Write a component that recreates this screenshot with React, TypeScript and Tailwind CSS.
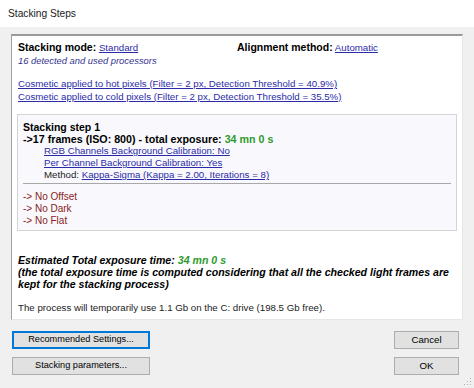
import React from "react";

function Link({ children }: { children: React.ReactNode }) {
  return <span className="text-[#2b2ba8] underline underline-offset-[1px]">{children}</span>;
}

function WinButton({ label, focused, small }: { label: string; focused?: boolean; small?: boolean }) {
  return (
    <button
      className={
        "h-[18px] w-full bg-[#e1e1e1] text-black leading-none border " +
        (small ? "text-[9.2px] " : "text-[9.7px] ") +
        (focused ? "border-[#0078d7] shadow-[inset_0_0_0_1px_#0078d7]" : "border-[#adadad]")
      }
    >
      {label}
    </button>
  );
}

export default function App() {
  return (
    <div className="w-[474px] h-[388px] bg-[#f0f0f0] flex flex-col text-[9.7px] leading-[12px] text-black font-['Liberation_Sans',Arial,sans-serif] overflow-hidden relative">
      {/* title bar */}
      <div className="h-[27px] bg-white flex items-center pl-2 text-[10.2px] text-[#1a1a1a]">Stacking Steps</div>

      {/* summary panel */}
      <div className="mx-[11px] mt-[7px] h-[286px] bg-white border-t-2 border-l border-r border-b border-t-[#9a9a9a] border-l-[#a0a0a0] border-r-[#e6e6e6] border-b-[#e6e6e6] px-[5px] pt-[5px] flex flex-col">
        <div className="flex pl-px">
          <div className="w-[219px]">
            <b className="text-[10.5px]">Stacking mode:</b> <Link>Standard</Link>
          </div>
          <div>
            <b className="text-[10.5px]">Alignment method:</b> <Link>Automatic</Link>
          </div>
        </div>
        <div className="pl-px italic text-[#33338f] text-[9.4px] mt-px">16 detected and used processors</div>

        <div className="pl-px mt-[11px] flex flex-col gap-px">
          <div>
            <Link>Cosmetic applied to hot pixels (Filter = 2 px, Detection Threshold = 40.9%)</Link>
          </div>
          <div>
            <Link>Cosmetic applied to cold pixels (Filter = 2 px, Detection Threshold = 35.5%)</Link>
          </div>
        </div>

        {/* stacking step box */}
        <div className="mt-[11px] h-[117px] border border-[#d4d4d4] bg-[#f9f9fd] px-[5px] pt-[6px]">
          <div className="font-bold text-[10.5px]">Stacking step 1</div>
          <div className="font-bold text-[10.7px]">
            -&gt;17 frames (ISO: 800) - total exposure: <span className="text-[#2e9a2e]">34 mn 0 s</span>
          </div>
          <div className="pl-[21px] flex flex-col">
            <div>
              <Link>RGB Channels Background Calibration: No</Link>
            </div>
            <div>
              <Link>Per Channel Background Calibration: Yes</Link>
            </div>
            <div className="text-[#222]">
              Method: <Link>Kappa-Sigma (Kappa = 2.00, Iterations = 8)</Link>
            </div>
          </div>
          <div className="h-px bg-[#a8a8a8] mt-[2px] mb-[7px]" />
          <div className="text-[#8a1c1c] flex flex-col text-[10px]">
            <div>-&gt; No Offset</div>
            <div>-&gt; No Dark</div>
            <div>-&gt; No Flat</div>
          </div>
        </div>

        <div className="pl-px mt-[23px] italic font-bold text-[10.6px]">
          <div>
            Estimated Total exposure time: <span className="text-[#2e9a2e]">34 mn 0 s</span>
          </div>
          <div>(the total exposure time is computed considering that all the checked light frames are</div>
          <div>kept for the stacking process)</div>
        </div>
        <div className="pl-px mt-[12px] text-[#222]">The process will temporarily use 1.1 Gb on the C: drive (198.5 Gb free).</div>
      </div>

      {/* buttons */}
      <div className="flex justify-between pl-[12px] pr-[15px] mt-[11px]">
        <div className="w-[138px] flex flex-col gap-[8px]">
          <WinButton label="Recommended Settings..." focused small />
          <WinButton label="Stacking parameters..." small />
        </div>
        <div className="w-[65px] flex flex-col gap-[8px]">
          <WinButton label="Cancel" />
          <WinButton label="OK" />
        </div>
      </div>

      {/* resize grip */}
      <svg className="absolute right-[2px] bottom-[2px]" width="10" height="10" viewBox="0 0 10 10">
        <rect x="8" y="2" width="1" height="1" fill="#b0b0b0" />
        <rect x="5" y="5" width="1" height="1" fill="#b0b0b0" />
        <rect x="8" y="5" width="1" height="1" fill="#b0b0b0" />
        <rect x="2" y="8" width="1" height="1" fill="#b0b0b0" />
        <rect x="5" y="8" width="1" height="1" fill="#b0b0b0" />
        <rect x="8" y="8" width="1" height="1" fill="#b0b0b0" />
      </svg>
    </div>
  );
}
